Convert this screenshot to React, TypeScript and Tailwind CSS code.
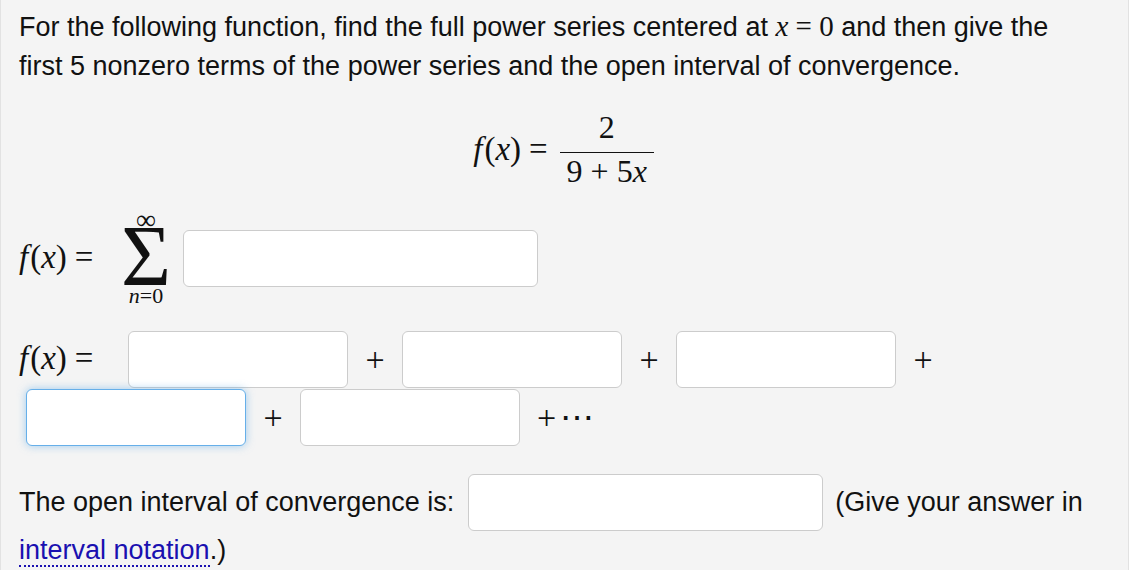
import React from 'react';

const serif = { fontFamily: '"Liberation Serif", "DejaVu Serif", serif' };

const Box: React.FC<{ wide?: boolean; focused?: boolean }> = ({ wide, focused }) => (
  <input
    type="text"
    className={
      (wide ? 'w-[355px] ' : 'w-[220px] ') +
      'h-[57px] shrink-0 bg-white rounded-md outline-none px-3 text-[22px] ' +
      (focused
        ? 'border border-[#66afe9] shadow-[0_0_8px_rgba(102,175,233,0.6)]'
        : 'border border-[#cccccc]')
    }
  />
);

const Fx: React.FC = () => (
  <span className="text-[33px] whitespace-nowrap" style={serif}>
    <i className="mr-[2px]">f</i>(<i>x</i>)<span className="ml-[8px]">=</span>
  </span>
);

const Plus: React.FC<{ dots?: boolean }> = ({ dots }) => (
  <span className={(dots ? 'pl-[17px] ' : 'w-[54px] text-center ') + 'shrink-0 text-[34px] text-[#111]'} style={serif}>
    +{dots ? <span className="tracking-[6px] ml-[4px]">⋯</span> : null}
  </span>
);

export default function App() {
  return (
    <div
      className="w-[1129px] min-h-[570px] bg-[#f4f4f4] border-l border-r border-[#e2e2e2] pl-[18px] pt-[8px] text-[#111] text-[27px] leading-[39px]"
      style={{ fontFamily: '"Liberation Sans", Arial, sans-serif' }}
    >
      <p className="pr-[40px]">
        For the following function, find the full power series centered at{' '}
        <span className="text-[29px] leading-none" style={serif}>
          <i>x</i> = 0
        </span>{' '}
        and then give the first 5 nonzero terms of the power series and the open interval of convergence.
      </p>

      <div className="flex justify-center items-center mt-[26px] pr-[20px]" style={serif}>
        <span className="text-[33px] mr-[12px]">
          <i className="mr-[2px]">f</i>(<i>x</i>)<span className="ml-[8px]">=</span>
        </span>
        <span className="flex flex-col items-center text-[32px] leading-[30px]">
          <span className="px-[6px]">2</span>
          <span className="h-[1px] w-[94px] bg-[#111] mt-[10px] mb-[3px]" />
          <span className="px-[6px]">
            9 + 5<i>x</i>
          </span>
        </span>
      </div>

      <div className="flex items-center mt-[24px]">
        <span className="w-[104px] shrink-0">
          <Fx />
        </span>
        <span className="flex flex-col items-center w-[46px] mr-[14px]" style={serif}>
          <span className="text-[28px] leading-[20px]">∞</span>
          <span className="text-[86px] leading-[52px]">Σ</span>
          <span className="text-[22px] leading-[20px] mt-[4px]">
            <i>n</i>=0
          </span>
        </span>
        <Box wide />
      </div>

      <div className="flex items-center mt-[25px]">
        <span className="w-[109px] shrink-0">
          <Fx />
        </span>
        <Box />
        <Plus />
        <Box />
        <Plus />
        <Box />
        <Plus />
      </div>
      <div className="flex items-center mt-[1px] pl-[7px]">
        <Box focused />
        <Plus />
        <Box />
        <Plus dots />
      </div>

      <div className="flex items-center mt-[28px]">
        <span>The open interval of convergence is:</span>
        <span className="ml-[14px] mr-[12px]">
          <Box wide />
        </span>
        <span>(Give your answer in</span>
      </div>
      <div className="mt-[0px]">
        <span className="text-[#1a10b0] border-b-2 border-dotted border-[#1a10b0]">interval notation</span>.)
      </div>
    </div>
  );
}
